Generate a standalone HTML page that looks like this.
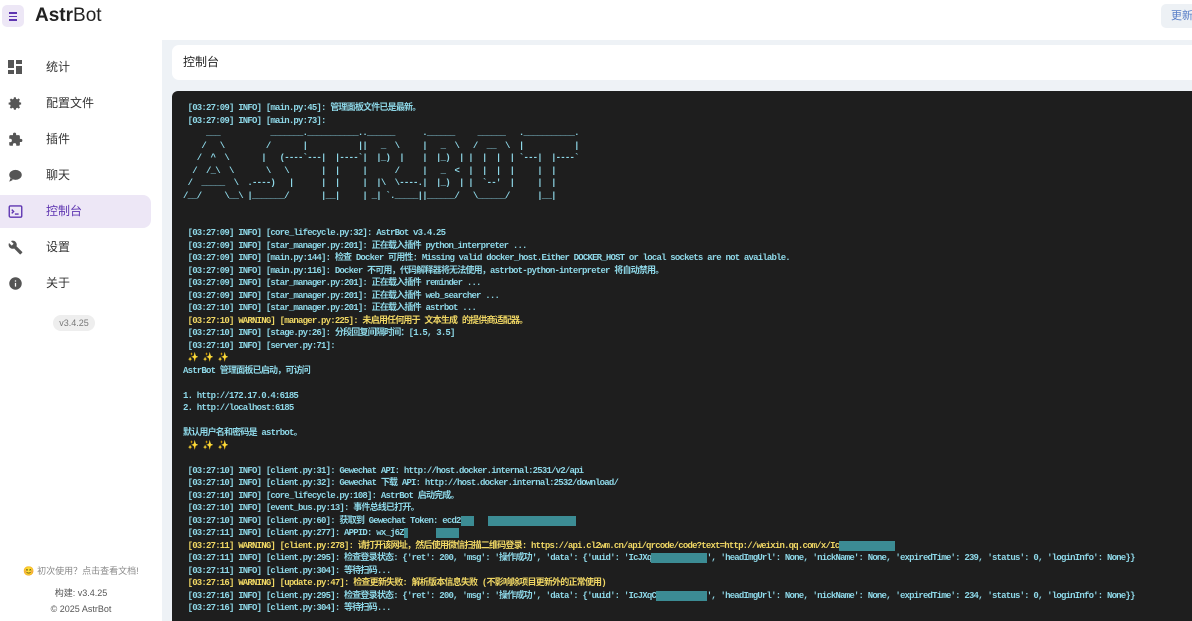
<!DOCTYPE html>
<html style="overflow:hidden"><head><meta charset="utf-8"><style>
*{margin:0;padding:0;box-sizing:border-box}
body{width:1192px;height:621px;overflow:hidden;background:#eef2f6;font-family:"Liberation Sans","Noto Sans CJK SC",sans-serif;position:relative}
.hdr{position:absolute;left:0;top:0;width:1192px;height:40px;background:#fff}
.menu{position:absolute;left:2px;top:5px;width:22px;height:22px;background:#ede7f6;border-radius:5px}
.menu i{position:absolute;left:7px;width:8px;height:1.5px;background:#5e35b1}
.logo{position:absolute;left:35px;top:5px;font-size:19px;color:#222}
.upd{position:absolute;left:1161px;top:4px;width:40px;height:24px;background:#edf1f5;border-radius:5px;color:#5a7fc8;font-size:11px;line-height:24px;padding-left:10px}
.side{position:absolute;left:0;top:40px;width:162px;height:581px;background:#fff}
.item{position:absolute;left:0;width:151px;height:33px;font-size:12px;color:#333;line-height:33px}
.item span{position:absolute;left:46px}
.item svg{position:absolute;left:8px;top:9px}
.act{background:#ede7f6;border-radius:0 8px 8px 0;color:#5e35b1}
.ver{position:absolute;left:53px;top:275px;width:42px;height:16px;border-radius:8px;background:#eee;color:#777;font-size:9px;line-height:16px;text-align:center}
.foot{position:absolute;left:0;width:162px;text-align:center;font-size:9px;color:#555}
.card{position:absolute;left:172px;top:45px;width:1030px;height:35px;background:#fff;border-radius:7px;font-size:12px;line-height:35px;padding-left:11px;color:#222}
.term{position:absolute;left:172px;top:91px;width:1030px;height:530px;background:#1e1e1e;border-radius:6px 6px 0 0}
pre{position:absolute;left:183px;top:102px;font-family:"Liberation Mono","Noto Sans CJK SC",monospace;font-size:9px;letter-spacing:-0.8px;line-height:12.5px;color:#8ed8e8;font-weight:bold;white-space:pre}
.w{color:#f0d764}
.b{background:#3c8c94;color:transparent}
</style></head><body>
<div class="hdr">
<div class="menu"><i style="top:7px"></i><i style="top:10.5px"></i><i style="top:14px"></i></div>
<div class="logo"><b>Astr</b>Bot</div>
<div class="upd">更新</div>
</div>
<div class="side">
<div class="item" style="top:11px"><svg width="14" height="14" viewBox="0 0 14 14" fill="#555"><rect x="0" y="0" width="6" height="8"/><rect x="8" y="0" width="6" height="4"/><rect x="0" y="10" width="6" height="4"/><rect x="8" y="6" width="6" height="8"/></svg><span>统计</span></div>
<div class="item" style="top:47px"><svg width="15" height="15" viewBox="0 0 24 24" fill="#555"><path d="M12 8a4 4 0 100 8 4 4 0 000-8zm9 5.5v-3l-2.6-.5a7 7 0 00-.8-1.9l1.5-2.2-2.1-2.1-2.2 1.5a7 7 0 00-1.9-.8L12.5 2h-3l-.5 2.6a7 7 0 00-1.9.8L4.9 3.9 2.8 6l1.5 2.2a7 7 0 00-.8 1.9L1 10.5v3l2.5.5a7 7 0 00.8 1.9l-1.5 2.2 2.1 2.1 2.2-1.5a7 7 0 001.9.8l.5 2.5h3l.5-2.5a7 7 0 001.9-.8l2.2 1.5 2.1-2.1-1.5-2.2a7 7 0 00.8-1.9z"/></svg><span>配置文件</span></div>
<div class="item" style="top:83px"><svg width="15" height="15" viewBox="0 0 24 24" fill="#555"><path d="M20.5 11H19V7a2 2 0 00-2-2h-4V3.5a2.5 2.5 0 00-5 0V5H4a2 2 0 00-2 2v3.8h1.5a2.7 2.7 0 010 5.4H2V20a2 2 0 002 2h3.8v-1.5a2.7 2.7 0 015.4 0V22H17a2 2 0 002-2v-4h1.5a2.5 2.5 0 000-5z"/></svg><span>插件</span></div>
<div class="item" style="top:119px"><svg width="15" height="15" viewBox="0 0 24 24" fill="#555"><ellipse cx="12" cy="11" rx="10" ry="8"/><path d="M4 16l-2 6 6-3z"/></svg><span>聊天</span></div>
<div class="item act" style="top:155px"><svg width="15" height="15" viewBox="0 0 24 24" fill="none" stroke="#5e35b1" stroke-width="2.2"><rect x="2" y="3" width="20" height="18" rx="2"/><path d="M6 9l3 3-3 3M11 16h6"/></svg><span>控制台</span></div>
<div class="item" style="top:191px"><svg width="15" height="15" viewBox="0 0 24 24" fill="#555"><path d="M22.7 19l-9.1-9.1c.9-2.3.4-5-1.5-6.9-2-2-5-2.4-7.4-1.3L9 6 6 9 1.6 4.7C.4 7.1.9 10.1 2.9 12.1c1.9 1.9 4.6 2.4 6.9 1.5l9.1 9.1c.4.4 1 .4 1.4 0l2.3-2.3c.5-.4.5-1.1.1-1.4z"/></svg><span>设置</span></div>
<div class="item" style="top:227px"><svg width="15" height="15" viewBox="0 0 24 24" fill="#555"><path d="M12 2a10 10 0 100 20 10 10 0 000-20zm1 15h-2v-6h2zm0-8h-2V7h2z"/></svg><span>关于</span></div>
<div class="ver">v3.4.25</div>
<div class="foot" style="top:524px;color:#888">😊 初次使用？点击查看文档!</div>
<div class="foot" style="top:546px">构建: v3.4.25</div>
<div class="foot" style="top:564px">© 2025 AstrBot</div>
</div>
<div class="card">控制台</div>
<div class="term"></div>
<pre> [03:27:09] INFO] [main.py:45]: 管理面板文件已是最新。
 [03:27:09] INFO] [main.py:73]:
     ___           _______.___________..______      .______     ______   .___________.
    /   \         /       |           ||   _  \     |   _  \   /  __  \  |           |
   /  ^  \       |   (----`---|  |----`|  |_)  |    |  |_)  | |  |  |  | `---|  |----`
  /  /_\  \       \   \       |  |     |      /     |   _  <  |  |  |  |     |  |
 /  _____  \  .----)   |      |  |     |  |\  \----.|  |_)  | |  `--'  |     |  |
/__/     \__\ |_______/       |__|     | _| `._____||______/   \______/      |__|


 [03:27:09] INFO] [core_lifecycle.py:32]: AstrBot v3.4.25
 [03:27:09] INFO] [star_manager.py:201]: 正在载入插件 python_interpreter ...
 [03:27:09] INFO] [main.py:144]: 检查 Docker 可用性: Missing valid docker_host.Either DOCKER_HOST or local sockets are not available.
 [03:27:09] INFO] [main.py:116]: Docker 不可用，代码解释器将无法使用，astrbot-python-interpreter 将自动禁用。
 [03:27:09] INFO] [star_manager.py:201]: 正在载入插件 reminder ...
 [03:27:09] INFO] [star_manager.py:201]: 正在载入插件 web_searcher ...
 [03:27:10] INFO] [star_manager.py:201]: 正在载入插件 astrbot ...
<span class="w"> [03:27:10] WARNING] [manager.py:225]: 未启用任何用于 文本生成 的提供商适配器。</span>
 [03:27:10] INFO] [stage.py:26]: 分段回复间隔时间：[1.5, 3.5]
 [03:27:10] INFO] [server.py:71]:
<span class="w"> ✨ ✨ ✨</span>
AstrBot 管理面板已启动，可访问

1. http://172.17.0.4:6185
2. http://localhost:6185

默认用户名和密码是 astrbot。
<span class="w"> ✨ ✨ ✨</span>

 [03:27:10] INFO] [client.py:31]: Gewechat API: http://host.docker.internal:2531/v2/api
 [03:27:10] INFO] [client.py:32]: Gewechat 下载 API: http://host.docker.internal:2532/download/
 [03:27:10] INFO] [core_lifecycle.py:108]: AstrBot 启动完成。
 [03:27:10] INFO] [event_bus.py:13]: 事件总线已打开。
 [03:27:10] INFO] [client.py:60]: 获取到 Gewechat Token: ecd2<span class="b">xxx</span>   <span class="b">xxxxxxxxxxxxxxxxxxx</span>
 [03:27:11] INFO] [client.py:277]: APPID: wx_j6Z<span class="b">x</span>      <span class="b">xxxxx</span>
<span class="w"> [03:27:11] WARNING] [client.py:278]: 请打开该网址，然后使用微信扫描二维码登录: https://api.cl2wm.cn/api/qrcode/code?text=http://weixin.qq.com/x/Ic<span class="b">xxxxxxxxxxxx</span></span>
 [03:27:11] INFO] [client.py:295]: 检查登录状态: {'ret': 200, 'msg': '操作成功', 'data': {'uuid': 'IcJXq<span class="b">xxxxxxxxxxxx</span>', 'headImgUrl': None, 'nickName': None, 'expiredTime': 239, 'status': 0, 'loginInfo': None}}
 [03:27:11] INFO] [client.py:304]: 等待扫码...
<span class="w"> [03:27:16] WARNING] [update.py:47]: 检查更新失败: 解析版本信息失败 (不影响除项目更新外的正常使用)</span>
 [03:27:16] INFO] [client.py:295]: 检查登录状态: {'ret': 200, 'msg': '操作成功', 'data': {'uuid': 'IcJXqC<span class="b">xxxxxxxxxxx</span>', 'headImgUrl': None, 'nickName': None, 'expiredTime': 234, 'status': 0, 'loginInfo': None}}
 [03:27:16] INFO] [client.py:304]: 等待扫码...</pre>
</body></html>
